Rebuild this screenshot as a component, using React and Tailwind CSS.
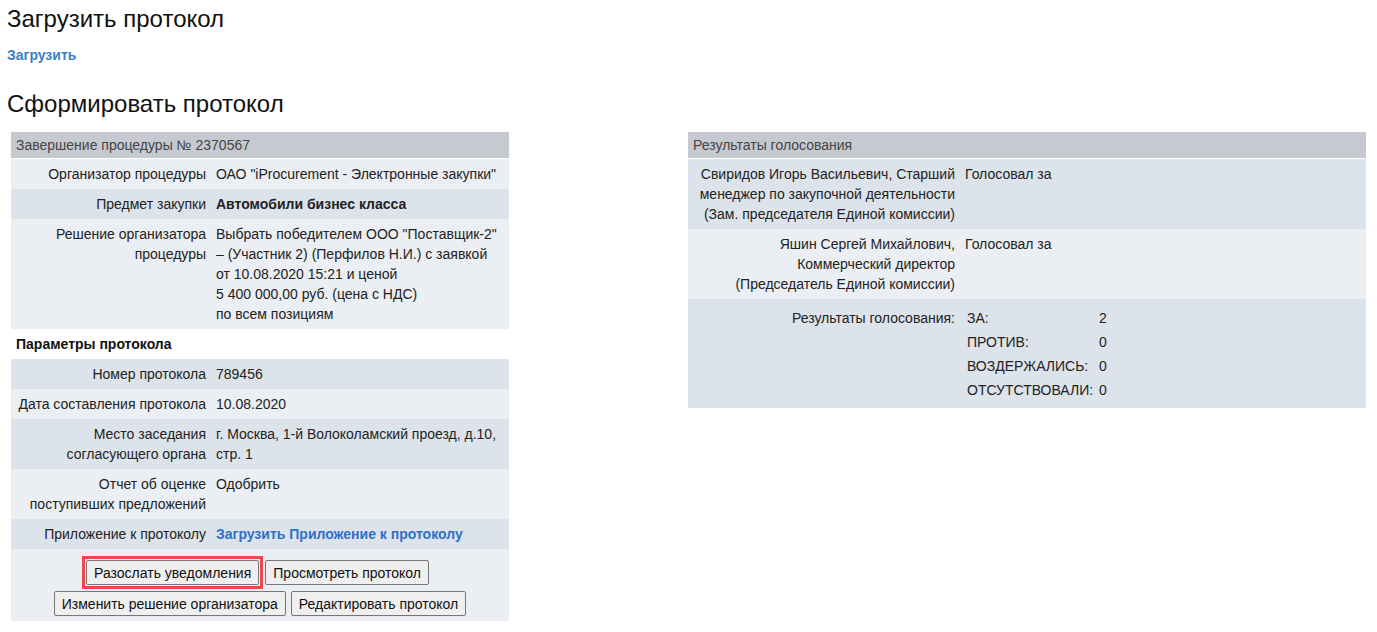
const procedureRows = [
  { label: "Организатор процедуры", value: 'ОАО "iProcurement - Электронные закупки"' },
  { label: "Предмет закупки", value: <b>Автомобили бизнес класса</b>, dark: true },
  {
    label: "Решение организатора процедуры",
    value: (
      <>
        Выбрать победителем ООО "Поставщик-2" – (Участник 2) (Перфилов Н.И.) с заявкой
        <br />
        от 10.08.2020 15:21 и ценой
        <br />
        5 400 000,00 руб. (цена с НДС)
        <br />
        по всем позициям
      </>
    ),
  },
];

const paramRows = [
  { label: "Номер протокола", value: "789456", dark: true },
  { label: "Дата составления протокола", value: "10.08.2020" },
  { label: "Место заседания согласующего органа", value: "г. Москва, 1-й Волоколамский проезд, д.10, стр. 1", dark: true },
  { label: "Отчет об оценке поступивших предложений", value: "Одобрить" },
  {
    label: "Приложение к протоколу",
    value: <a href="#" className="font-bold text-[#2f6fca]">Загрузить Приложение к протоколу</a>,
    dark: true,
  },
];

const votes = [
  { who: "Свиридов Игорь Васильевич, Старший менеджер по закупочной деятельности (Зам. председателя Единой комиссии)", result: "Голосовал за", dark: true },
  { who: "Яшин Сергей Михайлович, Коммерческий директор (Председатель Единой комиссии)", result: "Голосовал за" },
];

const totals = [
  ["ЗА:", "2"],
  ["ПРОТИВ:", "0"],
  ["ВОЗДЕРЖАЛИСЬ:", "0"],
  ["ОТСУТСТВОВАЛИ:", "0"],
];

function Row({ label, value, dark, labelWidth }) {
  return (
    <tr className={dark ? "bg-[#dde3ea]" : "bg-[#ebeef2]"}>
      <td className={`${labelWidth} py-[5px] pl-[4px] pr-[4px] text-right align-top`}>{label}</td>
      <td className="py-[5px] pl-[6px] pr-[6px] align-top">{value}</td>
    </tr>
  );
}

function Btn({ children, marked }) {
  return (
    <span className="relative inline-flex">
      <button className="h-[25px] px-[7px] text-[14px] bg-[#efefef] border border-[#767676] rounded-[2px] text-[#111]">
        {children}
      </button>
      {marked && <span className="absolute -inset-[4px] border-[3px] border-[#f0454b] pointer-events-none" />}
    </span>
  );
}

export default function App() {
  return (
    <div className="font-['Liberation_Sans',Arial,sans-serif] text-[14px] leading-[20px] text-[#222] bg-white min-h-screen pt-[5px] px-[7px]">
      <h1 className="text-[24px] leading-[28px] text-[#111]">Загрузить протокол</h1>
      <a href="#" className="block mt-[14px] text-[14px] leading-[16px] font-bold text-[#3b80c6]">
        Загрузить
      </a>
      <h2 className="mt-[27px] text-[24px] leading-[28px] text-[#111]">Сформировать протокол</h2>

      <div className="mt-[14px] ml-[4px] flex items-start gap-[179px]">
        <table className="w-[498px] border-collapse">
          <thead>
            <tr>
              <td colSpan={2} className="bg-[#c6cad0] pl-[5px] pt-[3px] pb-[3px] text-[#444] border-b border-white">
                Завершение процедуры № 2370567
              </td>
            </tr>
          </thead>
          <tbody>
            {procedureRows.map((r) => (
              <Row key={r.label} {...r} labelWidth="w-[199px]" />
            ))}
            <tr className="bg-white">
              <td colSpan={2} className="py-[5px] pl-[5px] font-bold text-[#111]">
                Параметры протокола
              </td>
            </tr>
            {paramRows.map((r) => (
              <Row key={r.label} {...r} labelWidth="w-[199px]" />
            ))}
            <tr className="bg-[#ebeef2]">
              <td colSpan={2} className="pt-[11px] pb-[5px]">
                <div className="flex flex-col items-center gap-[6px]">
                  <div className="flex gap-[6px] pr-[5px]">
                    <Btn marked>Разослать уведомления</Btn>
                    <Btn>Просмотреть протокол</Btn>
                  </div>
                  <div className="flex gap-[5px]">
                    <Btn>Изменить решение организатора</Btn>
                    <Btn>Редактировать протокол</Btn>
                  </div>
                </div>
              </td>
            </tr>
          </tbody>
        </table>

        <table className="w-[678px] border-collapse">
          <thead>
            <tr>
              <td colSpan={2} className="bg-[#c6cad0] pl-[5px] pt-[3px] pb-[3px] text-[#444] border-b border-white">
                Результаты голосования
              </td>
            </tr>
          </thead>
          <tbody>
            {votes.map((v) => (
              <Row key={v.who} label={v.who} value={v.result} dark={v.dark} labelWidth="w-[271px] !pl-[8px]" />
            ))}
            <tr className="bg-[#dde3ea]">
              <td className="w-[271px] pt-[9px] pr-[4px] text-right align-top">Результаты голосования:</td>
              <td className="pt-[7px] pb-[6px] pl-[8px] align-top">
                <div className="grid grid-cols-[132px_auto] leading-[24px]">
                  {totals.map(([k, n]) => (
                    <div key={k} className="contents">
                      <span>{k}</span>
                      <span>{n}</span>
                    </div>
                  ))}
                </div>
              </td>
            </tr>
          </tbody>
        </table>
      </div>
    </div>
  );
}
